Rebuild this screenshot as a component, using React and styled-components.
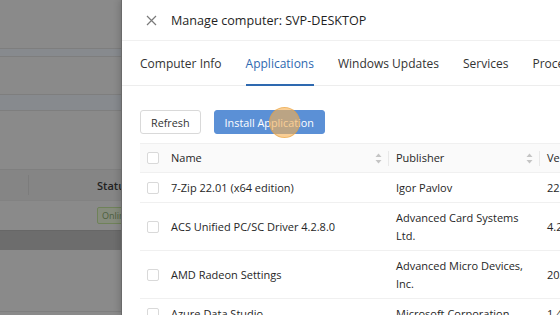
import React from 'react';
import styled, {createGlobalStyle} from 'styled-components';

const GlobalStyle = createGlobalStyle`
  html, body {
    margin: 0;
    padding: 0;
    width: 560px;
    height: 315px;
    overflow: hidden;
    background: #8a8a8a;
    font-family: 'Open Sans', 'Noto Sans', sans-serif;
  }
`;

const rows = [
    {name: '7-Zip 22.01 (x64 edition)', publisher: 'Igor Pavlov', version: '22.01', tall: false},
    {name: 'ACS Unified PC/SC Driver 4.2.8.0', publisher: 'Advanced Card Systems Ltd.', version: '4.2.8.0', tall: true},
    {name: 'AMD Radeon Settings', publisher: 'Advanced Micro Devices, Inc.', version: '2023.0612', tall: true},
    {name: 'Azure Data Studio', publisher: 'Microsoft Corporation', version: '1.44.1', tall: false},
];

const tabs = ['Computer Info', 'Applications', 'Windows Updates', 'Services', 'Processes'];

function SortIcon() {
    return (
        <svg width="7" height="11" viewBox="0 0 7 11">
            <path d="M3.5 0.5 L6.5 4 L0.5 4 Z" fill="#c4c4c4"/>
            <path d="M3.5 10.5 L6.5 7 L0.5 7 Z" fill="#c4c4c4"/>
        </svg>
    );
}

function CloseIcon() {
    return (
        <svg width="11" height="11" viewBox="0 0 11 11">
            <path d="M1 1 L10 10 M10 1 L1 10" stroke="#7a7a7a" strokeWidth="1.2"/>
        </svg>
    );
}

function App() {
    return (
        <Page>
            <GlobalStyle/>
            <Backdrop>
                <BgBar $h={47}/>
                <BgBand $h={7}/>
                <BgBar $h={36}/>
                <BgBand $h={15}/>
                <BgBar $h={57}/>
                <BgHeadRow>
                    <BgCell/>
                    <BgStatus>Status</BgStatus>
                </BgHeadRow>
                <BgDataRow>
                    <BgTag>Online</BgTag>
                </BgDataRow>
                <BgDark/>
                <BgBar $h={61} $line/>
            </Backdrop>
            <Drawer>
                <Header>
                    <CloseIcon/>
                    <Title>Manage computer: SVP-DESKTOP</Title>
                </Header>
                <Tabs>
                    {tabs.map((t) => (
                        <Tab key={t} $active={t === 'Applications'}>{t}</Tab>
                    ))}
                </Tabs>
                <Body>
                    <Toolbar>
                        <Button>Refresh</Button>
                        <Button $primary>
                            Install Application
                            <Spot/>
                        </Button>
                    </Toolbar>
                    <Table>
                        <HeadRow>
                            <Cell><Check/></Cell>
                            <HeadCell>Name<SortIcon/><Divider/></HeadCell>
                            <HeadCell>Publisher<SortIcon/><Divider/></HeadCell>
                            <HeadCell>Version</HeadCell>
                        </HeadRow>
                        {rows.map((r) => (
                            <Row key={r.name} $tall={r.tall}>
                                <Cell><Check/></Cell>
                                <Cell>{r.name}</Cell>
                                <Cell>{r.publisher}</Cell>
                                <Cell>{r.version}</Cell>
                            </Row>
                        ))}
                    </Table>
                </Body>
            </Drawer>
        </Page>
    );
}

const Page = styled.div`
  display: flex;
  width: 560px;
  height: 315px;
  overflow: hidden;
`;

const Backdrop = styled.div`
  width: 121px;
  flex-shrink: 0;
  display: flex;
  flex-direction: column;
  overflow: hidden;
  background: #8a8a8a;
  & > * {
    flex-shrink: 0;
  }
`;

const BgBar = styled.div`
  height: ${(p) => p.$h}px;
  border-bottom: 1px solid ${(p) => (p.$line ? '#7f7f7f' : 'transparent')};
`;

const BgBand = styled.div`
  height: ${(p) => p.$h}px;
  background: #878a8e;
  border-top: 1px solid #7e7e7e;
  border-bottom: 1px solid #7e7e7e;
`;

const BgHeadRow = styled.div`
  height: 30px;
  display: flex;
  align-items: center;
  background: #858585;
  border-top: 1px solid #7f7f7f;
  border-bottom: 1px solid #828282;
`;

const BgCell = styled.div`
  width: 28px;
  height: 20px;
  border-right: 1px solid #7c7c7c;
  flex-shrink: 0;
`;

const BgStatus = styled.div`
  margin-left: 68px;
  font-size: 11px;
  font-weight: 600;
  color: #222;
  white-space: nowrap;
`;

const BgDataRow = styled.div`
  height: 29px;
  display: flex;
  align-items: center;
  padding-left: 97px;
`;

const BgTag = styled.div`
  font-size: 9px;
  color: #4c5e3e;
  background: #868c7d;
  border: 1px solid #6f8259;
  border-radius: 2px;
  padding: 1px 4px;
  white-space: nowrap;
`;

const BgDark = styled.div`
  height: 19px;
  background: #6d6d6d;
  border-top: 1px solid #676767;
`;

const Drawer = styled.div`
  width: 520px;
  flex-shrink: 0;
  background: #fff;
  border-left: 1px solid #6a6a6a;
  box-shadow: -2px 0 6px rgba(0, 0, 0, 0.15);
  display: flex;
  flex-direction: column;
  color: #262626;
  & > * {
    flex-shrink: 0;
  }
`;

const Header = styled.div`
  height: 41px;
  display: flex;
  align-items: center;
  gap: 14px;
  padding-left: 24px;
  border-bottom: 1px solid #f0f0f0;
  box-sizing: border-box;
`;

const Title = styled.div`
  font-size: 12.6px;
  font-weight: 500;
  color: #1f1f1f;
`;

const Tabs = styled.div`
  display: flex;
  gap: 24px;
  padding-left: 18px;
  height: 45px;
  border-bottom: 1px solid #ededed;
  box-sizing: border-box;
`;

const Tab = styled.div`
  display: flex;
  align-items: center;
  padding-top: 1px;
  font-size: 12px;
  white-space: nowrap;
  color: ${(p) => (p.$active ? '#2e69b0' : '#333')};
  border-bottom: 2px solid ${(p) => (p.$active ? '#2e69b0' : 'transparent')};
  margin-bottom: -1px;
`;

const Body = styled.div`
  padding: 24px 0 0 18px;
`;

const Toolbar = styled.div`
  display: flex;
  gap: 13px;
  margin-bottom: 9px;
`;

const Button = styled.div`
  position: relative;
  height: 24px;
  box-sizing: border-box;
  display: flex;
  align-items: center;
  padding: 0 10px;
  font-size: 10.8px;
  border-radius: 3px;
  border: 1px solid ${(p) => (p.$primary ? '#5b90d6' : '#d9d9d9')};
  background: ${(p) => (p.$primary ? '#5b90d6' : '#fff')};
  color: ${(p) => (p.$primary ? '#fff' : '#333')};
`;

const Spot = styled.span`
  position: absolute;
  left: 54px;
  top: -4px;
  width: 31px;
  height: 31px;
  border-radius: 50%;
  background: rgba(247, 176, 82, 0.62);
  border: 1px solid rgba(230, 160, 60, 0.5);
  box-sizing: border-box;
`;

const Table = styled.div`
  display: flex;
  flex-direction: column;
  width: 520px;
`;

const grid = `
  display: grid;
  grid-template-columns: 24px 225px 151px 1fr;
  border-bottom: 1px solid #f0f0f0;
`;

const HeadRow = styled.div`
  ${grid};
  height: 28px;
  background: #fafafa;
  border-top: 1px solid #f0f0f0;
`;

const Row = styled.div`
  ${grid};
  height: ${(p) => (p.$tall ? 47 : 29)}px;
`;

const Cell = styled.div`
  display: flex;
  align-items: center;
  padding: 0 10px 0 7px;
  font-size: 11px;
  line-height: 18px;
  color: #262626;
  white-space: nowrap;
  overflow: hidden;
  ${Row} &:nth-child(3) {
    white-space: normal;
  }
`;

const HeadCell = styled(Cell)`
  position: relative;
  justify-content: space-between;
  padding-right: 7px;
  overflow: visible;
  font-weight: 500;
`;

const Divider = styled.span`
  position: absolute;
  right: 0;
  top: 7px;
  width: 1px;
  height: 15px;
  background: #e8e8e8;
`;

const Check = styled.span`
  width: 12px;
  height: 12px;
  border: 1px solid #d9d9d9;
  border-radius: 2px;
  background: #fff;
  box-sizing: border-box;
  flex-shrink: 0;
`;

export default App;
